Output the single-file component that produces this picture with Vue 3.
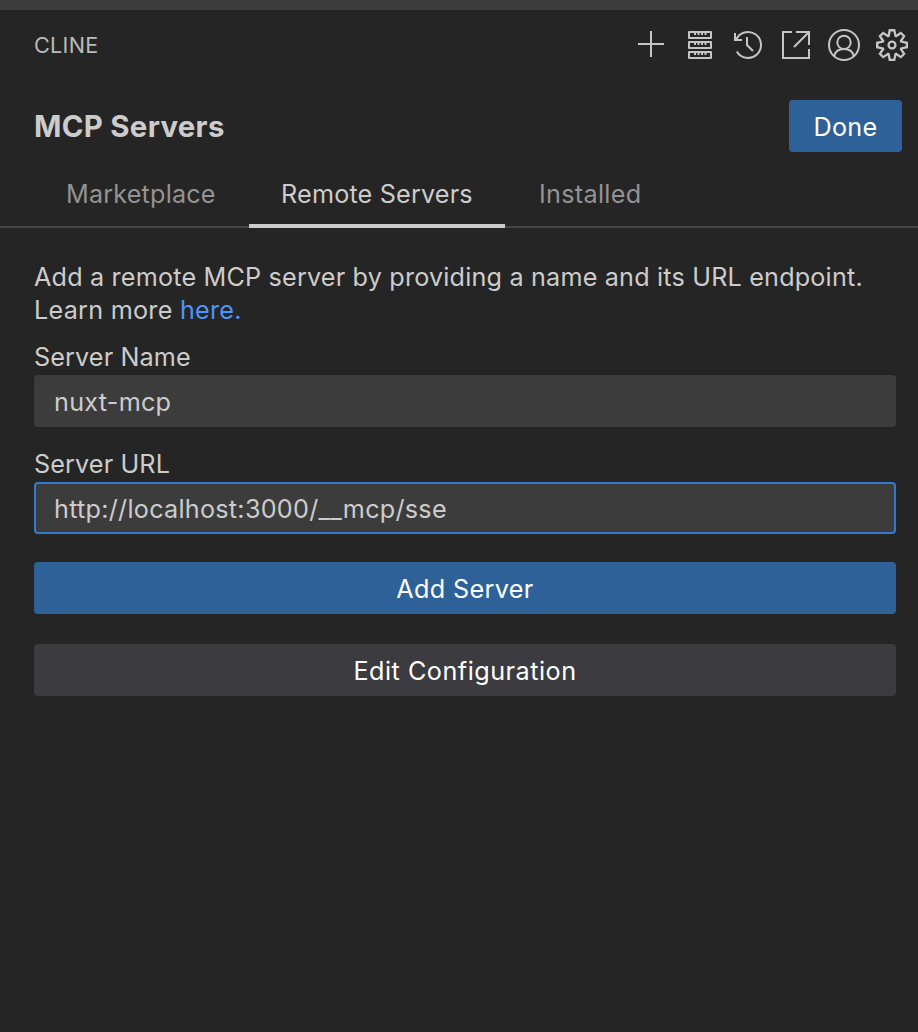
<template>
  <div class="panel">
    <div class="top-strip"></div>

    <!-- Panel header -->
    <header class="panel-header">
      <span class="panel-title">CLINE</span>
      <div class="actions">
        <button v-for="action in actions" :key="action.name" class="icon-button" :aria-label="action.name">
          <svg :viewBox="action.viewBox || '0 0 32 32'" width="32" height="32">
            <path v-if="action.fill" :d="action.fill" fill="currentColor" />
            <path
              v-if="action.stroke"
              :d="action.stroke"
              fill="none"
              stroke="currentColor"
              stroke-width="2"
              :stroke-linejoin="action.join || 'miter'"
            />
          </svg>
        </button>
      </div>
    </header>

    <!-- View title -->
    <div class="view-header">
      <h3>MCP Servers</h3>
      <button class="btn primary done">Done</button>
    </div>

    <!-- Tabs -->
    <nav class="tabs">
      <button
        v-for="tab in tabs"
        :key="tab.id"
        :class="['tab', tab.id, { active: activeTab === tab.id }]"
        @click="activeTab = tab.id"
      >
        {{ tab.label }}
      </button>
    </nav>

    <!-- Remote server form -->
    <form class="content" @submit.prevent>
      <p class="intro">
        Add a remote MCP server by providing a name and its URL endpoint.<br />
        <span class="learn-more">Learn more <a href="#" @click.prevent>here.</a></span>
      </p>

      <div class="field">
        <label for="serverName">Server Name</label>
        <input id="serverName" v-model="serverName" type="text" spellcheck="false" />
      </div>

      <div class="field">
        <label for="serverUrl">Server URL</label>
        <input id="serverUrl" v-model="serverUrl" class="focused" type="text" spellcheck="false" />
      </div>

      <button class="btn primary wide" type="submit">Add Server</button>
      <button class="btn secondary wide" type="button">Edit Configuration</button>
    </form>
  </div>
</template>

<script setup>
import { ref } from 'vue'

const serverName = ref('nuxt-mcp')
const serverUrl = ref('http://localhost:3000/__mcp/sse')
const activeTab = ref('remote')

const tabs = [
  { id: 'marketplace', label: 'Marketplace' },
  { id: 'remote', label: 'Remote Servers' },
  { id: 'installed', label: 'Installed' }
]

const actions = [
  { name: 'New Task', stroke: 'M15 2v26M2 15h26' },
  {
    name: 'MCP Servers',
    join: 'round',
    stroke:
      'M5 3h22v6H5zM5 13h22v6H5zM5 23h22v6H5zM11 3v3M14.5 3v3M18 3v3M21.500 3v3M11 13v3M14.5 13v3M18 13v3M21.500 13v3M11 23v3M14.5 23v3M18 23v3M21.500 23v3'
  },
  {
    name: 'History',
    stroke: 'M3 4v7h7M4 11A13 13 0 1 1 4.8 22.5M15 8v8l6 6'
  },
  {
    name: 'Open in Editor',
    stroke: 'M12 3H3v26h26v-9M16 3h13v13M14 18L29 3'
  },
  {
    name: 'Account',
    stroke:
      'M16 1a15 15 0 1 1 0 30a15 15 0 1 1 0-30zM16 6.7a6.7 6.7 0 1 1 0 13.4a6.7 6.7 0 1 1 0-13.4zM6.3 27.5C7 22.5 11 20 16 20s9 2.5 9.7 7.5'
  },
  {
    name: 'Settings',
    viewBox: '0 0 24 24',
    fill: 'M19.85 8.75l4.15.83v4.84l-4.15.83 2.35 3.52-3.43 3.43-3.52-2.35-.83 4.15H9.58l-.83-4.15-3.52 2.35-3.43-3.43 2.35-3.52L0 14.42V9.58l4.15-.83L1.8 5.23 5.23 1.8l3.52 2.35L9.58 0h4.84l.83 4.15 3.52-2.35 3.43 3.43-2.35 3.52zm-1.57 5.07l4-.81v-2l-4-.81-.54-1.3 2.29-3.43-1.43-1.43-3.43 2.29-1.3-.54-.81-4h-2l-.81 4-1.3.54-3.43-2.29-1.43 1.43L6.38 8.9l-.54 1.3-4 .81v2l4 .81.54 1.3-2.29 3.43 1.43 1.43 3.43-2.29 1.3.54.81 4h2l.81-4 1.3-.54 3.43 2.29 1.43-1.43-2.29-3.43.54-1.3zm-8.186-4.672A3.43 3.43 0 0 1 12 8.57 3.44 3.44 0 0 1 15.43 12a3.43 3.43 0 1 1-5.336-2.852zm.956 4.274c.281.188.612.288.95.288A1.7 1.7 0 0 0 13.71 12a1.71 1.71 0 1 0-2.66 1.422z'
  }
]
</script>

<style>
body {
  background: #252525;
}
</style>

<style scoped>
.panel {
  height: 1032px;
  background: #252525;
  color: #cccccc;
  font-family: Inter, "Liberation Sans", sans-serif;
  font-size: 25.2px;
  letter-spacing: 0.18px;
  overflow: hidden;
}

.panel * {
  box-sizing: border-box;
}

button,
input {
  margin: 0;
  border: 0;
  font: inherit;
  letter-spacing: inherit;
}

button {
  cursor: pointer;
}

.top-strip {
  height: 10px;
  background: #3c3c3c;
}

.panel-header {
  display: flex;
  justify-content: space-between;
  align-items: center;
  height: 70px;
  padding: 0 10px 0 34px;
}

.panel-title {
  color: #bbbbbb;
  font-size: 21.6px;
  letter-spacing: 0.3px;
}

.actions {
  display: flex;
  gap: 16px;
}

.icon-button {
  width: 32px;
  height: 32px;
  padding: 0;
  background: none;
  color: #c5c5c5;
}

.icon-button svg {
  display: block;
}

.view-header {
  display: flex;
  justify-content: space-between;
  align-items: center;
  margin-top: 20px;
  padding: 0 16px 0 34px;
}

h3 {
  margin: 0;
  font-size: 29.4px;
  font-weight: 700;
  letter-spacing: 0.3px;
}

.btn {
  height: 52px;
  padding: 2px 0 0;
  border-radius: 4px;
  color: #ffffff;
  letter-spacing: 0.35px;
}

.primary {
  background: #2e6198;
}

.secondary {
  background: #3b3b40;
  letter-spacing: 0.5px;
}

.done {
  width: 113px;
}

.wide {
  width: 100%;
}

.tabs {
  display: flex;
  gap: 2px;
  height: 76px;
  padding: 8px 0 0 34px;
  border-bottom: 2px solid #464646;
}

.tab {
  height: 68px;
  padding: 4px 0 0 32px;
  border-bottom: 4px solid transparent;
  background: none;
  color: #939393;
  text-align: left;
  white-space: nowrap;
}

.marketplace {
  width: 213px;
}

.remote {
  width: 256px;
}

.installed {
  letter-spacing: 0.3px;
}

.tab.active {
  border-bottom-color: #cccccc;
  color: #cccccc;
}

.content {
  display: flex;
  flex-direction: column;
  padding: 33px 22px 0 34px;
}

.intro {
  margin: 0 0 14px;
  line-height: 33px;
  white-space: nowrap;
}

.learn-more {
  letter-spacing: 0.25px;
}

.intro a {
  color: #4e94fb;
  text-decoration: none;
}

.field {
  display: flex;
  flex-direction: column;
  margin-bottom: 21px;
}

.field label {
  height: 34px;
  line-height: 33px;
  letter-spacing: 0.12px;
}

.field input {
  height: 52px;
  padding: 2px 20px 0;
  border-radius: 4px;
  outline: none;
  background: #3c3c3c;
  color: #cccccc;
  letter-spacing: 0.26px;
}

.field input.focused {
  padding: 2px 18px 0;
  border: 2px solid #3579cc;
}

.primary.wide {
  margin: 7px 0 30px;
}
</style>
